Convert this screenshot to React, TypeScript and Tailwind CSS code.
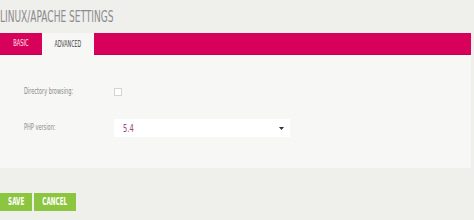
import React from "react";

const cond = { fontFamily: '"Liberation Sans Narrow", "DejaVu Sans Condensed", "Liberation Sans", sans-serif' };

export default function App() {
  return (
    <div className="w-[474px] h-[220px] bg-[#efefec] overflow-hidden" style={cond}>
      <div className="h-[33px] pt-[9px] pl-0">
        <div className="text-[15px] leading-[16px] text-[#8c8c8c] origin-left scale-x-[0.67] whitespace-nowrap">
          LINUX/APACHE SETTINGS
        </div>
      </div>
      <div className="w-[471px] h-[22px] bg-[#d7005a] border-b border-[#c10050] flex">
        <div className="w-[42px] h-full flex items-center justify-center text-[9.5px] text-white/90">
          <span className="scale-x-[0.6]">BASIC</span>
        </div>
        <div className="w-[52px] h-[22px] bg-[#f7f7f5] flex items-center justify-center text-[9.5px] text-[#444]">
          <span className="scale-x-[0.56]">ADVANCED</span>
        </div>
      </div>
      <div className="w-[471px] h-[113px] bg-[#f7f7f5] pt-[28px] pl-[24px]">
        <div className="flex items-center h-[18px]">
          <div className="w-[90px] text-[9px] text-[#8a8a8a] whitespace-nowrap">
            <span className="inline-block origin-left scale-x-[0.62]">Directory browsing:</span>
          </div>
          <div className="w-[8px] h-[8px] border border-[#d4d4d4] bg-white" />
        </div>
        <div className="flex items-center h-[18px] mt-[18px]">
          <div className="w-[90px] text-[9px] text-[#8a8a8a] whitespace-nowrap">
            <span className="inline-block origin-left scale-x-[0.62]">PHP version:</span>
          </div>
          <div className="w-[176px] h-[18px] bg-white flex items-center justify-between pl-[9px] pr-[6px]">
            <span className="inline-block origin-left scale-x-[0.75] text-[10px] text-[#a0457a]">5.4</span>
            <svg width="5" height="3" viewBox="0 0 5 3"><path d="M0 0 H5 L2.5 3 Z" fill="#333" /></svg>
          </div>
        </div>
      </div>
      <div className="flex gap-[2px] mt-[25px]">
        <div className="w-[32px] h-[18px] bg-[#8cc540] flex items-center justify-center text-[11px] font-bold text-white">
          <span className="scale-x-[0.57]">SAVE</span>
        </div>
        <div className="w-[42px] h-[18px] bg-[#8cc540] flex items-center justify-center text-[11px] font-bold text-white">
          <span className="scale-x-[0.57]">CANCEL</span>
        </div>
      </div>
    </div>
  );
}
